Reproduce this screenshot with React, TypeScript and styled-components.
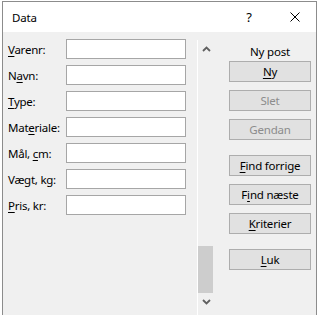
import React from "react";
import styled, { createGlobalStyle } from "styled-components";

const Global = createGlobalStyle`
  html, body { margin: 0; padding: 0; }
  body {
    width: 320px; height: 315px; overflow: hidden;
    background: #ffffff;
    font-family: "Noto Sans", "Open Sans", sans-serif;
  }
`;

const Page = styled.div`
  width: 320px;
  height: 315px;
  padding: 1px 0 0 2px;
  box-sizing: border-box;
  overflow: hidden;
`;

const Window = styled.div`
  width: 315px;
  height: 330px;
  border: 1px solid #8c8c8c;
  box-sizing: border-box;
  display: flex;
  flex-direction: column;
  background: #f0f0f0;
`;

const TitleBar = styled.div`
  height: 30px;
  flex: none;
  background: #ffffff;
  display: flex;
  align-items: center;
  padding-left: 9px;
`;

const Title = styled.div`
  flex: 1;
  font-size: 11.5px;
  letter-spacing: -0.2px;
  color: #000;
`;

const Help = styled.div`
  width: 14px;
  font-size: 13px;
  color: #000;
  margin-right: 34px;
  text-align: center;
`;

const CloseBox = styled.div`
  width: 10px;
  height: 10px;
  margin-right: 16px;
  display: flex;
`;

const Body = styled.div`
  flex: 1;
  display: flex;
  min-height: 0;
`;

const Fields = styled.div`
  width: 194px;
  padding: 7px 0 0 5px;
  box-sizing: border-box;
  display: flex;
  flex-direction: column;
  gap: 6px;
`;

const Row = styled.div`
  height: 20px;
  display: flex;
  align-items: center;
`;

const Label = styled.div`
  width: 58px;
  font-size: 11.5px;
  letter-spacing: -0.25px;
  color: #000;
  white-space: nowrap;
`;

const Input = styled.div`
  width: 120px;
  height: 20px;
  box-sizing: border-box;
  border: 1px solid #a6a6a6;
  background: #ffffff;
`;

const U = styled.span`
  text-decoration: underline;
  text-underline-offset: 2px;
  text-decoration-thickness: 1px;
`;

const Scroll = styled.div`
  width: 16px;
  flex: none;
  margin-top: 8px;
  border-left: 1px solid #ffffff;
  display: flex;
  flex-direction: column;
`;

const ArrowBox = styled.div`
  height: 17px;
  display: flex;
  align-items: center;
  justify-content: center;
  flex: none;
`;

const Track = styled.div`
  flex: none;
  height: 189px;
`;

const Thumb = styled.div`
  height: 47px;
  width: 15px;
  background: #cdcdcd;
  flex: none;
`;

const Side = styled.div`
  flex: 1;
  padding: 11px 5px 0 15px;
  display: flex;
  flex-direction: column;
  align-items: stretch;
`;

const Caption = styled.div`
  font-size: 11.5px;
  letter-spacing: -0.2px;
  color: #000;
  text-align: center;
  height: 17px;
  line-height: 17px;
  margin-bottom: 1px;
`;

const Button = styled.div<{ $disabled?: boolean; $gap: number }>`
  height: 21px;
  width: 82px;
  box-sizing: border-box;
  margin-top: ${(p) => p.$gap}px;
  border: 1px solid #adadad;
  background: #e1e1e1;
  color: ${(p) => (p.$disabled ? "#8c8c8c" : "#000")};
  font-size: 11.5px;
  letter-spacing: -0.2px;
  display: flex;
  align-items: center;
  justify-content: center;
  line-height: 1;
`;

const Chevron = ({ up }: { up?: boolean }) => (
  <svg width="9" height="6" viewBox="0 0 9 6">
    <path
      d={up ? "M1 5 L4.5 1.5 L8 5" : "M1 1 L4.5 4.5 L8 1"}
      fill="none"
      stroke="#606060"
      strokeWidth="1.8"
    />
  </svg>
);

const fields: { pre: string; key: string; post: string }[] = [
  { pre: "", key: "V", post: "arenr:" },
  { pre: "N", key: "a", post: "vn:" },
  { pre: "", key: "T", post: "ype:" },
  { pre: "Mat", key: "e", post: "riale:" },
  { pre: "Mål, ", key: "c", post: "m:" },
  { pre: "Vægt, kg:", key: "", post: "" },
  { pre: "", key: "P", post: "ris, kr:" },
];

const buttons: { pre: string; key: string; post: string; disabled?: boolean; gap: number }[] = [
  { pre: "", key: "N", post: "y", gap: 0 },
  { pre: "Slet", key: "", post: "", disabled: true, gap: 8 },
  { pre: "Gendan", key: "", post: "", disabled: true, gap: 8 },
  { pre: "", key: "F", post: "ind forrige", gap: 15 },
  { pre: "F", key: "i", post: "nd næste", gap: 8 },
  { pre: "", key: "K", post: "riterier", gap: 8 },
  { pre: "", key: "L", post: "uk", gap: 15 },
];

export default function App() {
  return (
    <>
      <Global />
      <Page>
        <Window>
          <TitleBar>
            <Title>Data</Title>
            <Help>?</Help>
            <CloseBox>
              <svg width="10" height="10" viewBox="0 0 10 10">
                <path d="M0.5 0.5 L9.5 9.5 M9.5 0.5 L0.5 9.5" stroke="#000" strokeWidth="1" />
              </svg>
            </CloseBox>
          </TitleBar>
          <Body>
            <Fields>
              {fields.map((f, i) => (
                <Row key={i}>
                  <Label>
                    {f.pre}
                    {f.key && <U>{f.key}</U>}
                    {f.post}
                  </Label>
                  <Input />
                </Row>
              ))}
            </Fields>
            <Scroll>
              <ArrowBox>
                <Chevron up />
              </ArrowBox>
              <Track />
              <Thumb />
              <ArrowBox>
                <Chevron />
              </ArrowBox>
            </Scroll>
            <Side>
              <Caption>Ny post</Caption>
              {buttons.map((b, i) => (
                <Button key={i} $disabled={b.disabled} $gap={b.gap}>
                  <span>
                    {b.pre}
                    {b.key && <U>{b.key}</U>}
                    {b.post}
                  </span>
                </Button>
              ))}
            </Side>
          </Body>
        </Window>
      </Page>
    </>
  );
}
